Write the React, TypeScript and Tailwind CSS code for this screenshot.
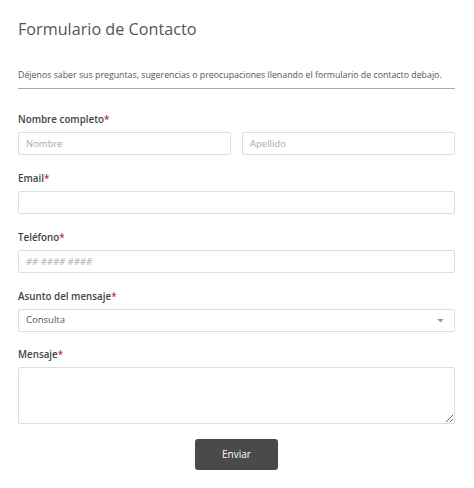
import React from "react";

export default function App() {
  const font = { fontFamily: '"Open Sans", "Noto Sans", sans-serif' };
  const Label = ({ text }: { text: string }) => (
    <div className="h-[14px] leading-[14px] text-[9.8px] font-semibold text-[#444]">
      {text}
      <span className="text-[#c0392b]">*</span>
    </div>
  );
  return (
    <div style={font} className="w-[474px] h-[488px] bg-white px-[18px] pt-[17px] box-border">
      <div className="w-[437px]">
        <h1 className="text-[16.2px] leading-[24px] text-[#555] font-normal">Formulario de Contacto</h1>
        <p className="mt-[28px] text-[8.8px] leading-[12px] text-[#555] pb-[7px] border-b border-[#aaa] whitespace-nowrap">
          Déjenos saber sus preguntas, sugerencias o preocupaciones llenando el formulario de contacto debajo.
        </p>
        <div className="mt-[24px] flex flex-col gap-[17px]">
          <div className="flex flex-col gap-[5px]">
            <Label text="Nombre completo" />
            <div className="flex gap-[11px]">
              <input
                placeholder="Nombre"
                className="w-[213px] h-[23px] border border-[#ddd] rounded-[2px] px-[7px] text-[9.5px] text-[#555] placeholder:text-[#aaa] outline-none"
              />
              <input
                placeholder="Apellido"
                className="w-[213px] h-[23px] border border-[#ddd] rounded-[2px] px-[7px] text-[9.5px] text-[#555] placeholder:text-[#aaa] outline-none"
              />
            </div>
          </div>
          <div className="flex flex-col gap-[5px]">
            <Label text="Email" />
            <input className="w-full h-[23px] border border-[#ddd] rounded-[2px] px-[7px] text-[9.5px] outline-none" />
          </div>
          <div className="flex flex-col gap-[5px]">
            <Label text="Teléfono" />
            <input
              placeholder="## #### ####"
              className="w-full h-[23px] border border-[#ddd] rounded-[2px] px-[7px] text-[9.5px] italic placeholder:text-[#aaa] outline-none"
            />
          </div>
          <div className="flex flex-col gap-[5px]">
            <Label text="Asunto del mensaje" />
            <div className="w-full h-[23px] border border-[#ddd] rounded-[2px] px-[7px] flex items-center justify-between">
              <span className="text-[9.5px] text-[#555]">Consulta</span>
              <svg width="7" height="4" viewBox="0 0 8 5" className="mr-[3px]">
                <path d="M0 0 L8 0 L4 4.5 Z" fill="#999" />
              </svg>
            </div>
          </div>
          <div className="flex flex-col gap-[5px] -mt-[1px]">
            <Label text="Mensaje" />
            <textarea className="w-full h-[57px] border border-[#ddd] rounded-[2px] px-[7px] text-[9.5px] outline-none resize-y block" />
          </div>
        </div>
        <div className="flex justify-center mt-[15px]">
          <button className="w-[83px] h-[31px] bg-[#4a4a4a] rounded-[3px] text-white text-[10px]">
            Enviar
          </button>
        </div>
      </div>
    </div>
  );
}
